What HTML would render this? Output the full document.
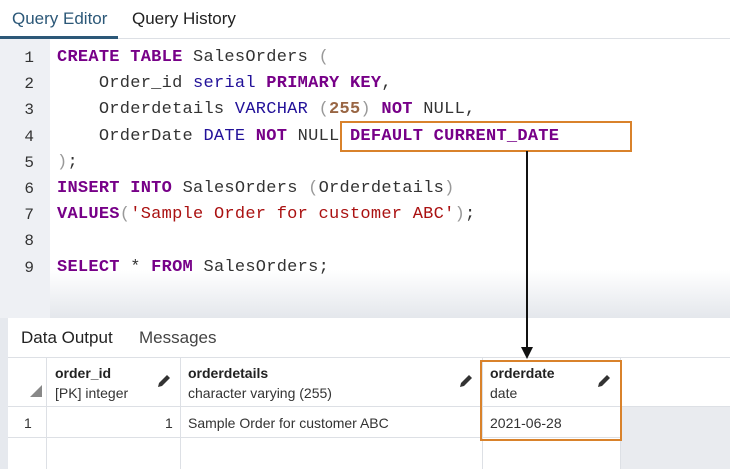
<!DOCTYPE html>
<html><head><style>
body{margin:0;width:730px;height:469px;overflow:hidden;background:#fff;font-family:"Liberation Sans",sans-serif;position:relative}
.a{position:absolute}
.code{font-family:"Liberation Mono",monospace;font-size:17px;letter-spacing:0.26px;color:#333;white-space:pre;line-height:26.2px}
.k{color:#770088;font-weight:bold}
.t{color:#221199}
.n{color:#964;font-weight:bold}
.s{color:#a11}
.p{color:#999}
.ln{font-family:"Liberation Mono",monospace;font-size:16px;color:#333;line-height:26.2px;text-align:right;width:34px}
.h{font-size:14px;color:#222}
</style></head><body>
<div class="a" style="left:0;top:0;width:730px;height:38px;border-bottom:1px solid #dde0e5"></div>
<div class="a" style="left:12px;top:9px;font-size:17px;color:#2c5878">Query Editor</div>
<div class="a" style="left:132px;top:9px;font-size:17px;color:#222">Query History</div>
<div class="a" style="left:0;top:36px;width:118px;height:3px;background:#2c5878"></div>
<div class="a" style="left:0;top:39px;width:50px;height:280px;background:#eef0f4"></div>
<div class="a" style="left:50px;top:270px;width:680px;height:48px;background:linear-gradient(#fff,#e4e7ec)"></div>
<div class="a" style="left:0;top:318px;width:730px;height:151px;background:#e6e9ee"></div>
<div class="a ln" style="left:0;top:45px">1<br>2<br>3<br>4<br>5<br>6<br>7<br>8<br>9</div>
<div class="a code" style="left:57px;top:45px"><span class="k">CREATE</span> <span class="k">TABLE</span> SalesOrders <span class="p">(</span>
    Order_id <span class="t">serial</span> <span class="k">PRIMARY</span> <span class="k">KEY</span>,
    Orderdetails <span class="t">VARCHAR</span> <span class="p">(</span><span class="n">255</span><span class="p">)</span> <span class="k">NOT</span> NULL,
    OrderDate <span class="t">DATE</span> <span class="k">NOT</span> NULL <span class="k">DEFAULT</span> <span class="k">CURRENT_DATE</span>
<span class="p">)</span>;
<span class="k">INSERT</span> <span class="k">INTO</span> SalesOrders <span class="p">(</span>Orderdetails<span class="p">)</span>
<span class="k">VALUES</span><span class="p">(</span><span class="s">'Sample Order for customer ABC'</span><span class="p">)</span>;

<span class="k">SELECT</span> * <span class="k">FROM</span> SalesOrders;</div>
<div class="a" style="left:340px;top:121px;width:288px;height:27px;border:2px solid #d9822b"></div>
<div class="a" style="left:8px;top:318px;width:722px;height:151px;background:#fff"></div>
<div class="a" style="left:21px;top:328px;font-size:17px;color:#222">Data Output</div>
<div class="a" style="left:139px;top:328px;font-size:17px;color:#444">Messages</div>
<div class="a" style="left:8px;top:357px;width:722px;height:1px;background:#dde0e5"></div>
<div class="a" style="left:8px;top:406px;width:722px;height:1px;background:#dde0e5"></div>
<div class="a" style="left:8px;top:437px;width:612px;height:1px;background:#dde0e5"></div>
<div class="a" style="left:620px;top:407px;width:110px;height:62px;background:#e9ebef"></div>
<div class="a" style="left:46px;top:358px;width:1px;height:111px;background:#dde0e5"></div>
<div class="a" style="left:180px;top:358px;width:1px;height:111px;background:#dde0e5"></div>
<div class="a" style="left:482px;top:358px;width:1px;height:111px;background:#dde0e5"></div>
<div class="a" style="left:620px;top:358px;width:1px;height:111px;background:#dde0e5"></div>
<div class="a" style="left:30px;top:385px;width:0;height:0;border-left:12px solid transparent;border-bottom:12px solid #888"></div>
<div class="a h" style="left:55px;top:365px;font-weight:bold">order_id</div>
<div class="a h" style="left:55px;top:385px;color:#333">[PK] integer</div>
<div class="a h" style="left:188px;top:365px;font-weight:bold">orderdetails</div>
<div class="a h" style="left:188px;top:385px;color:#333">character varying (255)</div>
<div class="a h" style="left:490px;top:365px;font-weight:bold">orderdate</div>
<div class="a h" style="left:490px;top:385px;color:#333">date</div>
<svg class="a" style="left:157px;top:374px" width="14" height="14" viewBox="0 0 14 14"><path d="M1 13 L2 9 L10 1 L13 4 L5 12 Z" fill="#333"/></svg>
<svg class="a" style="left:459px;top:374px" width="14" height="14" viewBox="0 0 14 14"><path d="M1 13 L2 9 L10 1 L13 4 L5 12 Z" fill="#333"/></svg>
<svg class="a" style="left:597px;top:374px" width="14" height="14" viewBox="0 0 14 14"><path d="M1 13 L2 9 L10 1 L13 4 L5 12 Z" fill="#333"/></svg>
<div class="a h" style="left:24px;top:415px;color:#333">1</div>
<div class="a h" style="left:165px;top:415px;color:#333">1</div>
<div class="a h" style="left:188px;top:415px;color:#333">Sample Order for customer ABC</div>
<div class="a h" style="left:490px;top:415px;color:#333">2021-06-28</div>
<div class="a" style="left:480px;top:360px;width:138px;height:77px;border:2px solid #d9822b"></div>
<div class="a" style="left:526px;top:151px;width:2px;height:198px;background:#111"></div>
<div class="a" style="left:521px;top:347px;width:0;height:0;border-left:6px solid transparent;border-right:6px solid transparent;border-top:12px solid #111"></div>
</body></html>
